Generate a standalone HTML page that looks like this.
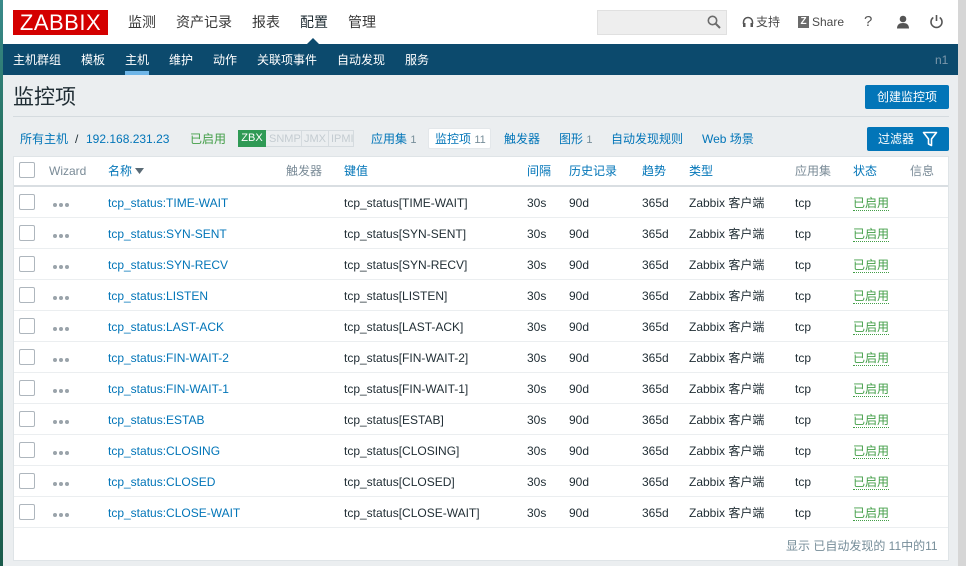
<!DOCTYPE html>
<html><head><meta charset="utf-8"><style>
*{margin:0;padding:0;box-sizing:border-box}
body{width:966px;height:566px;overflow:hidden;background:#ebeef0;font-family:"Liberation Sans","Noto Sans CJK SC",sans-serif;font-size:12px;color:#1f2c33;position:relative}
.a{position:absolute;white-space:nowrap;line-height:14px}
.strip{left:0;top:0;width:3px;height:566px;background:linear-gradient(#3a8a8a,#1f6a55,#2c7a70,#1a5a4a)}
.sb{left:958px;top:0;width:8px;height:566px;background:#d6d6d6}
.hdr{left:3px;top:0;width:955px;height:44px;background:#fff}
.nav{left:3px;top:44px;width:955px;height:31px;background:#0c4a6d}
.logo{left:13px;top:10px;width:95px;height:25px;background:#d40000;color:#fff;font-size:22px;line-height:25px!important;text-align:center;letter-spacing:0.5px}
.m{top:14px;font-size:14px;color:#383838;line-height:17px!important}
.s{top:53px;font-size:12px;color:#fff}
.link{color:#0275b8}
.hd{color:#0275b8}
.gr{color:#7a8b97}
.cb{width:16px;height:16px;border:1px solid #aeb6bd;border-radius:2px;background:#fff}
.dot{width:4px;height:4px;border-radius:50%;background:#9aa3aa}
.en{color:#429e47;border-bottom:1px dotted #429e47}
</style></head><body>
<div class="a strip"></div>
<div class="a hdr"></div>
<div class="a logo">ZABBIX</div>
<div class="a m" style="left:128px">监测</div>
<div class="a m" style="left:176px">资产记录</div>
<div class="a m" style="left:252px">报表</div>
<div class="a m" style="left:300px;color:#1f2c33">配置</div>
<div class="a m" style="left:348px">管理</div>
<div class="a" style="left:597px;top:10px;width:130px;height:25px;background:#eeeeee;border:1px solid #e0e0e0"></div>
<svg class="a" style="left:707px;top:15px" width="14" height="14" viewBox="0 0 14 14"><circle cx="5.5" cy="5.5" r="4.2" fill="none" stroke="#6b6b6b" stroke-width="1.6"/><path d="M8.5 8.5L13 13" stroke="#6b6b6b" stroke-width="2"/></svg>
<svg class="a" style="left:742px;top:16px" width="12" height="12" viewBox="0 0 12 12"><path d="M1.5 8V6a4.5 4.5 0 0 1 9 0v2" fill="none" stroke="#555" stroke-width="1.5"/><rect x="1" y="7" width="2.5" height="4" fill="#555"/><rect x="8.5" y="7" width="2.5" height="4" fill="#555"/></svg>
<div class="a" style="left:756px;top:15px;font-size:12px;color:#4a4a4a">支持</div>
<div class="a" style="left:798px;top:16px;width:11px;height:12px;background:#6b6b6b;color:#fff;font-size:10px;line-height:12px!important;text-align:center;font-weight:bold">Z</div>
<div class="a" style="left:812px;top:15px;font-size:12px;color:#4a4a4a">Share</div>
<div class="a" style="left:864px;top:13px;font-size:15px;color:#555;line-height:17px!important">?</div>
<svg class="a" style="left:896px;top:15px" width="14" height="14" viewBox="0 0 14 14"><circle cx="7" cy="4" r="3.3" fill="#555"/><path d="M1 13.5c0-4 2.5-5.5 6-5.5s6 1.5 6 5.5z" fill="#555"/></svg>
<svg class="a" style="left:929px;top:14px" width="15" height="15" viewBox="0 0 15 15"><path d="M4.3 3.5a5.5 5.5 0 1 0 6.4 0" fill="none" stroke="#555" stroke-width="1.6"/><path d="M7.5 1v6" stroke="#555" stroke-width="1.6"/></svg>
<div class="a nav"></div>
<svg class="a" style="left:306px;top:38px" width="14" height="7"><path d="M0 7L7 0L14 7z" fill="#0c4a6d"/></svg>
<div class="a s" style="left:13px">主机群组</div>
<div class="a s" style="left:81px">模板</div>
<div class="a s" style="left:125px">主机</div>
<div class="a" style="left:125px;top:71px;width:24px;height:4px;background:#6fb6e8"></div>
<div class="a s" style="left:169px">维护</div>
<div class="a s" style="left:213px">动作</div>
<div class="a s" style="left:257px">关联项事件</div>
<div class="a s" style="left:337px">自动发现</div>
<div class="a s" style="left:405px">服务</div>
<div class="a" style="left:935px;top:53px;color:#7c98ab;font-size:12px">n1</div>
<div class="a" style="left:13px;top:85px;font-size:21px;color:#1f2c33;line-height:25px!important">监控项</div>
<div class="a" style="left:865px;top:85px;width:84px;height:24px;background:#0275b8;border-radius:2px;color:#fff;text-align:center;line-height:24px!important">创建监控项</div>
<div class="a" style="left:13px;top:116px;width:936px;height:1px;background:#d5dbdf"></div>
<div class="a link" style="left:20px;top:132px">所有主机</div>
<div class="a" style="left:75px;top:132px;color:#1f2c33">/</div>
<div class="a link" style="left:86px;top:132px">192.168.231.23</div>
<div class="a" style="left:190px;top:132px;color:#429e47">已启用</div>
<div class="a" style="left:238px;top:130px;width:116px;height:17px;border:1px solid #d5dbdf;background:#ebeef0"></div>
<div class="a" style="left:238px;top:130px;width:28px;height:17px;background:#2f9a55;color:#fff;font-size:11px;line-height:17px!important;text-align:center">ZBX</div>
<div class="a" style="left:269px;top:132px;font-size:11px;color:#c4ccd1">SNMP</div>
<div class="a" style="left:301px;top:130px;width:1px;height:17px;background:#d5dbdf"></div>
<div class="a" style="left:304px;top:132px;font-size:11px;color:#c4ccd1">JMX</div>
<div class="a" style="left:328px;top:130px;width:1px;height:17px;background:#d5dbdf"></div>
<div class="a" style="left:331px;top:132px;font-size:11px;color:#c4ccd1">IPMI</div>
<div class="a link" style="left:371px;top:132px">应用集 <span style="color:#768d99;font-size:11px">1</span></div>
<div class="a" style="left:428px;top:128px;width:63px;height:21px;background:#fff;border:1px solid #e3e7ea;border-radius:2px"></div>
<div class="a link" style="left:435px;top:132px">监控项 <span style="color:#768d99;font-size:11px">11</span></div>
<div class="a link" style="left:504px;top:132px">触发器</div>
<div class="a link" style="left:559px;top:132px">图形 <span style="color:#768d99;font-size:11px">1</span></div>
<div class="a link" style="left:611px;top:132px">自动发现规则</div>
<div class="a link" style="left:702px;top:132px">Web 场景</div>
<div class="a" style="left:867px;top:127px;width:82px;height:24px;background:#0275b8;border-radius:2px;color:#fff;line-height:24px!important;padding-left:11px">过滤器</div>
<svg class="a" style="left:922px;top:131px" width="16" height="16" viewBox="0 0 16 16"><path d="M1.5 1.5h13l-5 6.5v6.5l-3-1.5v-5z" fill="none" stroke="#fff" stroke-width="1.6" stroke-linejoin="round"/></svg>
<div class="a" style="left:13px;top:156px;width:936px;height:405px;background:#fff;border:1px solid #dfe4e7"></div>
<div class="a" style="left:14px;top:185px;width:934px;height:2px;background:#d9dee2"></div>
<div class="a cb" style="left:19px;top:162px"></div>
<div class="a gr" style="left:49px;top:164px">Wizard</div>
<div class="a hd" style="left:108px;top:164px">名称</div>
<svg class="a" style="left:135px;top:168px" width="9" height="6"><path d="M0 0h9L4.5 6z" fill="#5b6b76"/></svg>
<div class="a gr" style="left:286px;top:164px">触发器</div>
<div class="a hd" style="left:344px;top:164px">键值</div>
<div class="a hd" style="left:527px;top:164px">间隔</div>
<div class="a hd" style="left:569px;top:164px">历史记录</div>
<div class="a hd" style="left:642px;top:164px">趋势</div>
<div class="a hd" style="left:689px;top:164px">类型</div>
<div class="a gr" style="left:795px;top:164px">应用集</div>
<div class="a hd" style="left:853px;top:164px">状态</div>
<div class="a gr" style="left:910px;top:164px">信息</div>
<div id="rows"></div>
<div class="a" style="left:786px;top:539px;color:#768d99">显示 已自动发现的 11中的11</div>
<div class="a sb"></div>
<script>
var n=["TIME-WAIT","SYN-SENT","SYN-RECV","LISTEN","LAST-ACK","FIN-WAIT-2","FIN-WAIT-1","ESTAB","CLOSING","CLOSED","CLOSE-WAIT"];
var h="";
n.forEach(function(s,i){var y=187+i*31;var t=y+9;
h+='<div class="a" style="left:14px;top:'+(y+30)+'px;width:934px;height:1px;background:#ebeef0"></div>';
h+='<div class="a cb" style="left:19px;top:'+(y+7)+'px"></div>';
[53,59,65].forEach(function(x){h+='<div class="a dot" style="left:'+x+'px;top:'+(y+16)+'px"></div>';});
h+='<div class="a link" style="left:108px;top:'+t+'px">tcp_status:'+s+'</div>';
h+='<div class="a" style="left:344px;top:'+t+'px">tcp_status['+s+']</div>';
h+='<div class="a" style="left:527px;top:'+t+'px">30s</div>';
h+='<div class="a" style="left:569px;top:'+t+'px">90d</div>';
h+='<div class="a" style="left:642px;top:'+t+'px">365d</div>';
h+='<div class="a" style="left:689px;top:'+t+'px">Zabbix 客户端</div>';
h+='<div class="a" style="left:795px;top:'+t+'px">tcp</div>';
h+='<div class="a en" style="left:853px;top:'+t+'px">已启用</div>';
});
document.getElementById("rows").innerHTML=h;
</script>
</body></html>
